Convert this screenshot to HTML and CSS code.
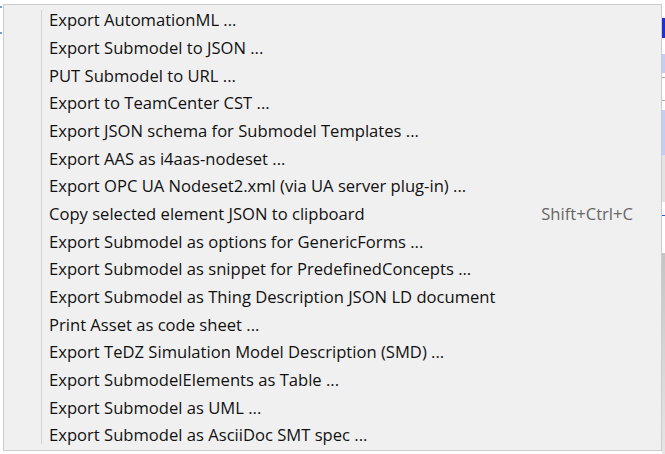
FILE: index.html
```html
<!DOCTYPE html>
<html>
<head>
<meta charset="utf-8">
<link rel="stylesheet" href="styles.css">
</head>
<body>
<div class="backdrop">
  <span class="bg-bit bit-a"></span>
  <span class="bg-bit bit-b"></span>
  <span class="bg-bit bit-c"></span>
  <span class="bg-bit bit-d"></span>
  <span class="bg-bit bit-e"></span>
  <span class="bg-bit bit-f"></span>
  <span class="bg-bit bit-g"></span>
  <span class="bg-bit bit-h"></span>
  <span class="bg-bit bit-i"></span>
  <span class="bg-bit bit-j"></span>
</div>
<div class="menu">
  <ul class="items">
    <li class="item"><span class="label">Export AutomationML ...</span></li>
    <li class="item"><span class="label">Export Submodel to JSON ...</span></li>
    <li class="item"><span class="label">PUT Submodel to URL ...</span></li>
    <li class="item"><span class="label">Export to TeamCenter CST ...</span></li>
    <li class="item"><span class="label">Export JSON schema for Submodel Templates ...</span></li>
    <li class="item"><span class="label">Export AAS as i4aas-nodeset ...</span></li>
    <li class="item"><span class="label">Export OPC UA Nodeset2.xml (via UA server plug-in) ...</span></li>
    <li class="item"><span class="label">Copy selected element JSON to clipboard</span><span class="shortcut">Shift+Ctrl+C</span></li>
    <li class="item"><span class="label">Export Submodel as options for GenericForms ...</span></li>
    <li class="item"><span class="label">Export Submodel as snippet for PredefinedConcepts ...</span></li>
    <li class="item"><span class="label">Export Submodel as Thing Description JSON LD document</span></li>
    <li class="item"><span class="label">Print Asset as code sheet ...</span></li>
    <li class="item"><span class="label">Export TeDZ Simulation Model Description (SMD) ...</span></li>
    <li class="item"><span class="label">Export SubmodelElements as Table ...</span></li>
    <li class="item"><span class="label">Export Submodel as UML ...</span></li>
    <li class="item"><span class="label">Export Submodel as AsciiDoc SMT spec ...</span></li>
  </ul>
</div>
</body>
</html>
```

FILE: styles.css
```css
html, body {
  margin: 0;
  padding: 0;
  background: #ffffff;
  width: 665px;
  height: 454px;
  overflow: hidden;
}

.backdrop {
  position: relative;
  width: 665px;
  height: 454px;
}

.bg-bit {
  position: absolute;
  display: block;
}
.bit-a { left: 662px; top: 18px; width: 3px; height: 20px; background: #1733d6; }
.bit-b { left: 662px; top: 54px; width: 3px; height: 19px; background: #c3cdf7; }
.bit-c { left: 662px; top: 77px; width: 3px; height: 1px; background: #a8a8a8; }
.bit-d { left: 662px; top: 100px; width: 3px; height: 1px; background: #a8a8a8; }
.bit-e { left: 662px; top: 110px; width: 3px; height: 45px; background: #c3cdf7; }
.bit-f { left: 662px; top: 155px; width: 3px; height: 47px; background: #e4e4e4; }
.bit-g { left: 662px; top: 215px; width: 3px; height: 1px; background: #2b5bd6; }
.bit-h { left: 662px; top: 253px; width: 3px; height: 201px; background: linear-gradient(#c4c4c4, #e6e6e6); }
.bit-i { left: 0; top: 6px; width: 2px; height: 2px; background: #6d9ae0; }
.bit-j { left: 0; top: 32px; width: 2px; height: 2px; background: #6d9ae0; }

.menu {
  position: absolute;
  left: 3px;
  top: 4px;
  width: 657px;
  height: 445px;
  border: 1px solid #cccccc;
  background: #f0f0f0;
  box-sizing: content-box;
}

.menu::before {
  content: "";
  position: absolute;
  left: 37px;
  top: 5px;
  bottom: 6px;
  width: 1px;
  background: #d5d5d5;
}

.items {
  list-style: none;
  margin: 0;
  padding: 1px 0 0 0;
}

.item {
  display: flex;
  align-items: center;
  height: 27.67px;
  padding: 0 28px 0 45px;
  font-family: "Open Sans", "Noto Sans", sans-serif;
  font-size: 16.6px;
  color: #111111;
  white-space: nowrap;
}

.label {
  flex: 1;
}

.shortcut {
  color: #666666;
}
```
